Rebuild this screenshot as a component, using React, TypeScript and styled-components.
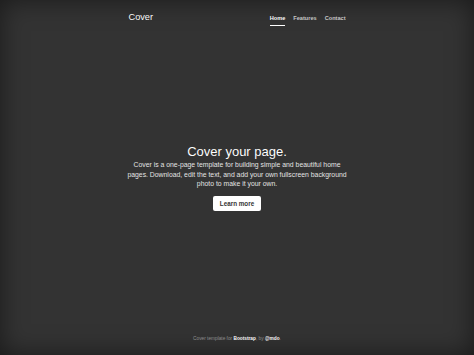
import React from "react";
import styled, { createGlobalStyle } from "styled-components";

const Global = createGlobalStyle`
  html, body { margin: 0; padding: 0; height: 100%; }
  body {
    background: #333;
    font-family: "Liberation Sans", Arial, Helvetica, sans-serif;
    color: #fff;
  }
  #root { height: 100%; }
`;

const Page = styled.div`
  box-sizing: border-box;
  height: 355px;
  width: 100%;
  background: #333;
  box-shadow: inset 0 0 26px rgba(0, 0, 0, 0.5);
  text-shadow: 0 0.3px 0.6px rgba(0, 0, 0, 0.5);
  display: grid;
  grid-template-rows: 1fr auto 1fr;
  justify-items: center;
`;

const Masthead = styled.header`
  align-self: start;
  box-sizing: border-box;
  width: 217px;
  padding-top: 12px;
  display: flex;
  justify-content: space-between;
  align-items: baseline;
`;

const Brand = styled.h3`
  margin: 0;
  font-size: 9.2px;
  line-height: 11px;
  font-weight: 400;
  color: #fff;
`;

const Nav = styled.nav`
  display: flex;
  gap: 8px;
`;

const NavLink = styled.a<{ $active?: boolean }>`
  font-size: 5.6px;
  line-height: 8px;
  font-weight: 700;
  color: ${(p) => (p.$active ? "#fff" : "rgba(255,255,255,0.78)")};
  text-decoration: none;
  padding-bottom: 2.5px;
  border-bottom: 1.5px solid ${(p) => (p.$active ? "#fff" : "transparent")};
`;

const Cover = styled.main`
  display: flex;
  flex-direction: column;
  align-items: center;
  text-align: center;
`;

const Title = styled.h1`
  margin: 0;
  font-size: 13px;
  line-height: 15.6px;
  font-weight: 400;
  color: #fff;
`;

const Lead = styled.p`
  margin: 0.6px 0 0;
  width: 229px;
  font-size: 6.85px;
  line-height: 9.7px;
  font-weight: 300;
  color: #ececec;
`;

const Button = styled.a`
  margin-top: 7px;
  display: inline-block;
  padding: 2.8px 6.8px;
  font-size: 6.3px;
  line-height: 9.7px;
  font-weight: 700;
  color: #333;
  background: #fff;
  border-radius: 2px;
  text-shadow: none;
  text-decoration: none;
`;

const Footer = styled.footer`
  align-self: end;
  padding-bottom: 13px;
  font-size: 4.75px;
  line-height: 7px;
  color: rgba(255, 255, 255, 0.5);
`;

const FootLink = styled.a`
  color: #fff;
  font-weight: 700;
  text-decoration: none;
`;

export default function App() {
  return (
    <>
      <Global />
      <Page>
        <Masthead>
          <Brand>Cover</Brand>
          <Nav>
            <NavLink $active href="#">Home</NavLink>
            <NavLink href="#">Features</NavLink>
            <NavLink href="#">Contact</NavLink>
          </Nav>
        </Masthead>
        <Cover>
          <Title>Cover your page.</Title>
          <Lead>
            Cover is a one-page template for building simple and beautiful home
            pages. Download, edit the text, and add your own fullscreen
            background photo to make it your own.
          </Lead>
          <Button href="#">Learn more</Button>
        </Cover>
        <Footer>
          Cover template for <FootLink href="#">Bootstrap</FootLink>, by{" "}
          <FootLink href="#">@mdo</FootLink>.
        </Footer>
      </Page>
    </>
  );
}
